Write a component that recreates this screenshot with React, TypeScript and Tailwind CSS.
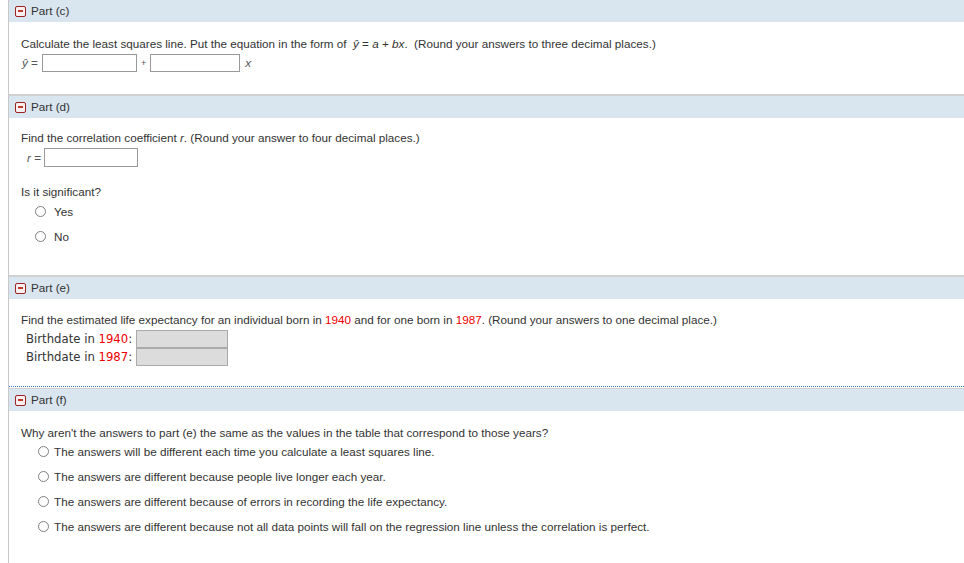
import React from "react";

function Header({ label }: { label: string }) {
    return (
        <div className="flex h-[22px] items-center bg-[#d9e5ef] pl-[6px]">
            <span className="flex h-[11px] w-[11px] items-center justify-center rounded-[2px] border border-[#9b2226] bg-[#fbeeee]">
                <span className="h-[2px] w-[5px] bg-[#c0392b]" />
            </span>
            <span className="ml-[5px] text-[#333]">{label}</span>
        </div>
    );
}

function Radio({ label, indent, gap }: { label: string; indent: string; gap: string }) {
    return (
        <div className={`flex h-[25px] items-center ${indent}`}>
            <span className="h-[11px] w-[11px] rounded-full border border-[#808080] bg-white" />
            <span className={`${gap} text-[#333]`}>{label}</span>
        </div>
    );
}

const Red = ({ children }: { children: React.ReactNode }) => (
    <span className="text-[#ee0000]">{children}</span>
);

export default function App() {
    return (
        <div
            className="min-h-[563px] w-[964px] bg-white text-[11.7px] leading-[14px] text-[#333]"
            style={{ fontFamily: '"Liberation Sans", Arial, sans-serif' }}
        >
            <div className="ml-[8px] min-h-[563px] border-l border-[#c8c8c8]">
                {/* Part (c) */}
                <Header label="Part (c)" />
                <div className="h-[72px] pl-[12px] pt-[15px]">
                    <p>
                        Calculate the least squares line. Put the equation in the form of&nbsp;{" "}
                        <i>ŷ</i> = <i>a</i> + <i>bx</i>.&nbsp; (Round your answers to three decimal places.)
                    </p>
                    <div className="mt-[3px] flex items-center pl-[1px]">
                        <span className="text-[#555]">
                            <i>ŷ</i> =
                        </span>
                        <span className="ml-[4px] h-[18px] w-[95px] border border-[#999] bg-white" />
                        <span className="ml-[4px] text-[9px] text-[#555]">+</span>
                        <span className="ml-[4px] h-[18px] w-[90px] border border-[#999] bg-white" />
                        <i className="ml-[5px] text-[#555]">x</i>
                    </div>
                </div>

                {/* Part (d) */}
                <div className="border-t-2 border-[#d0d0d0]">
                    <Header label="Part (d)" />
                </div>
                <div className="h-[157px] pl-[12px] pt-[13px]">
                    <p>
                        Find the correlation coefficient <i>r</i>. (Round your answer to four decimal places.)
                    </p>
                    <div className="mt-[3px] flex items-center pl-[6px]">
                        <span className="text-[#555]">
                            <i>r</i> =
                        </span>
                        <span className="ml-[3px] h-[19px] w-[94px] border border-[#999] bg-white" />
                    </div>
                    <p className="mt-[18px]">Is it significant?</p>
                    <Radio label="Yes" indent="pl-[14px]" gap="ml-[8px]" />
                    <Radio label="No" indent="pl-[14px]" gap="ml-[8px]" />
                </div>

                {/* Part (e) */}
                <div className="border-t-2 border-[#d0d0d0]">
                    <Header label="Part (e)" />
                </div>
                <div className="h-[87px] pl-[12px] pt-[14px]">
                    <p>
                        Find the estimated life expectancy for an individual born in <Red>1940</Red> and for one born in{" "}
                        <Red>1987</Red>. (Round your answers to one decimal place.)
                    </p>
                    <div
                        className="mt-[3px] pl-[5px] text-[11.7px] leading-[18px] text-[#333]"
                        style={{ fontFamily: '"DejaVu Sans", Verdana, sans-serif' }}
                    >
                        <div className="flex items-center">
                            <span>
                                Birthdate in <Red>1940</Red>:
                            </span>
                            <span className="ml-[4px] h-[18px] w-[92px] border border-[#aaa] bg-[#dcdcdc]" />
                        </div>
                        <div className="flex items-center">
                            <span>
                                Birthdate in <Red>1987</Red>:
                            </span>
                            <span className="ml-[4px] h-[18px] w-[92px] border border-[#aaa] bg-[#dcdcdc]" />
                        </div>
                    </div>
                </div>

                {/* Part (f) */}
                <div className="border-t border-dotted border-[#3b73b9]" />
                <div className="h-[2px] border-b border-[#d0d0d0]" />
                <Header label="Part (f)" />
                <div className="pl-[12px] pt-[15px] pb-[20px]">
                    <p>
                        Why aren't the answers to part (e) the same as the values in the table that correspond to those years?
                    </p>
                    <div className="-mt-[1px]">
                        <Radio label="The answers will be different each time you calculate a least squares line." indent="pl-[17px]" gap="ml-[5px]" />
                        <Radio label="The answers are different because people live longer each year." indent="pl-[17px]" gap="ml-[5px]" />
                        <Radio label="The answers are different because of errors in recording the life expectancy." indent="pl-[17px]" gap="ml-[5px]" />
                        <Radio
                            label="The answers are different because not all data points will fall on the regression line unless the correlation is perfect."
                            indent="pl-[17px]"
                            gap="ml-[5px]"
                        />
                    </div>
                </div>
            </div>
        </div>
    );
}
